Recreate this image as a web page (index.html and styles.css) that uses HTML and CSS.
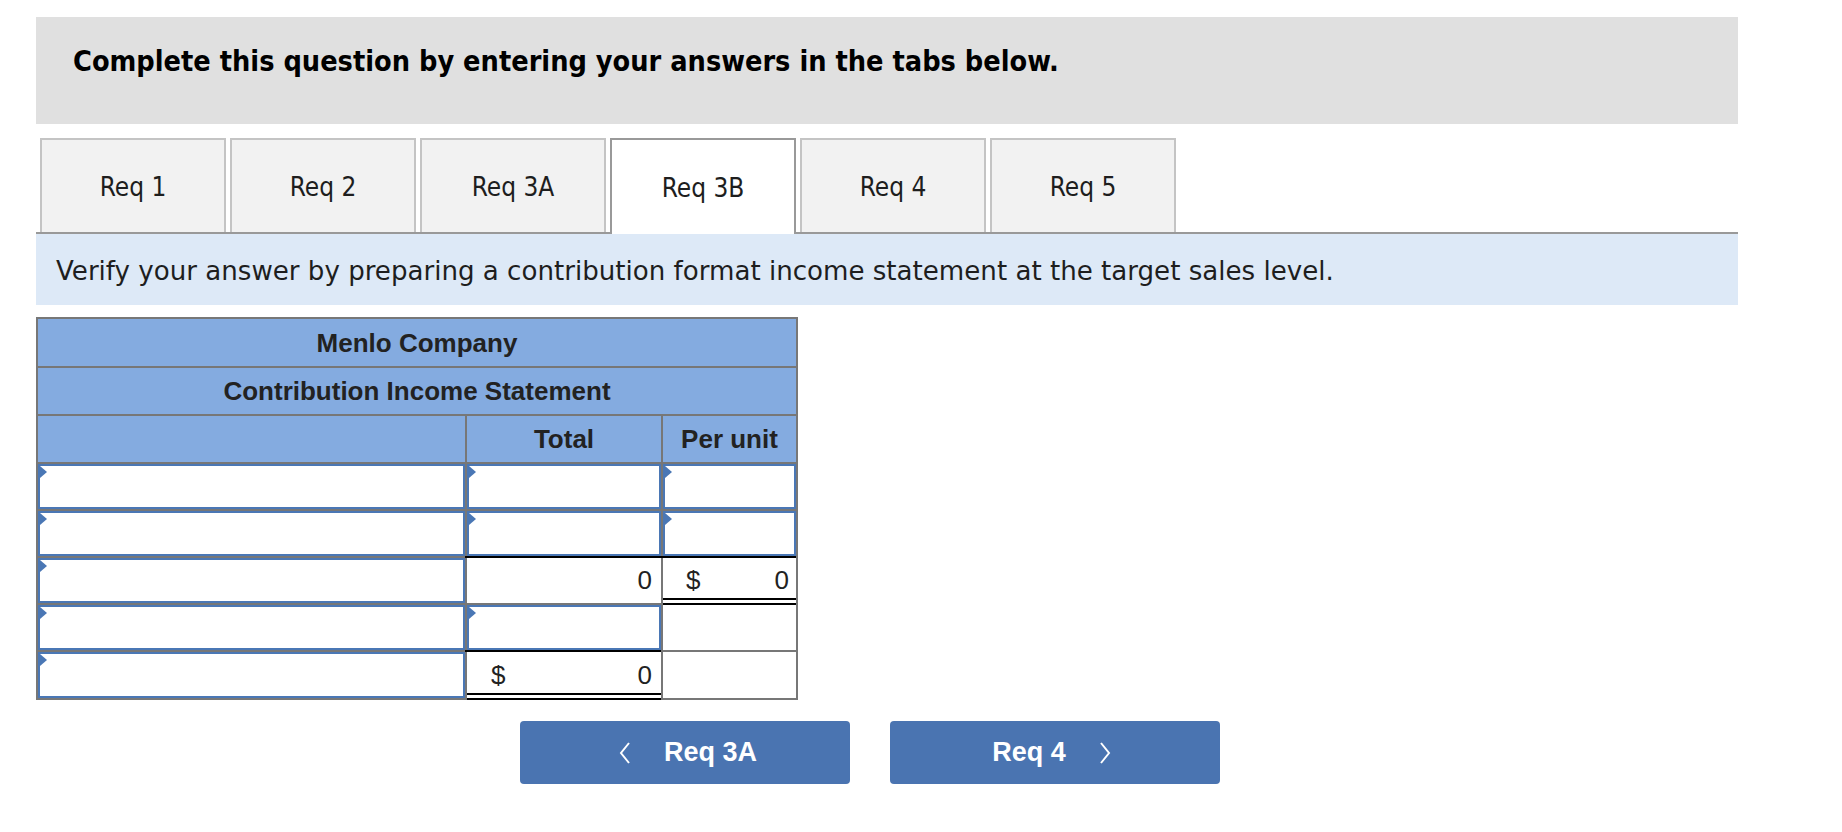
FILE: index.html
```html
<!DOCTYPE html>
<html lang="en">
<head>
<meta charset="utf-8">
<title>Req 3B</title>
<link rel="stylesheet" href="styles.css">
</head>
<body>
<div class="page">
  <div class="prompt"><h1>Complete this question by entering your answers in the tabs below.</h1></div>

  <div class="tabs">
    <div class="tab">Req 1</div>
    <div class="tab">Req 2</div>
    <div class="tab">Req 3A</div>
    <div class="tab active">Req 3B</div>
    <div class="tab">Req 4</div>
    <div class="tab">Req 5</div>
  </div>

  <div class="instr">Verify your answer by preparing a contribution format income statement at the target sales level.</div>

  <div class="stmt">
    <div class="hd span3">Menlo Company</div>
    <div class="hd span3">Contribution Income Statement</div>
    <div class="hd"></div>
    <div class="hd">Total</div>
    <div class="hd">Per unit</div>

    <div class="cell inp"></div>
    <div class="cell inp"></div>
    <div class="cell inp"></div>

    <div class="cell inp"></div>
    <div class="cell inp"></div>
    <div class="cell inp"></div>

    <div class="cell inp"></div>
    <div class="cell num top"><span>0</span></div>
    <div class="cell num money unit top dbl"><span>$</span><span>0</span></div>

    <div class="cell inp"></div>
    <div class="cell inp"></div>
    <div class="cell"></div>

    <div class="cell inp"></div>
    <div class="cell num money top dbl"><span>$</span><span>0</span></div>
    <div class="cell"></div>
  </div>

  <div class="nav">
    <div class="btn prev">
      <svg class="chev" width="12" height="22" viewBox="0 0 12 22"><polyline points="10,1 2,11 10,21" fill="none" stroke="#fff" stroke-width="2"/></svg>
      <span>Req 3A</span>
    </div>
    <div class="btn next">
      <span>Req 4</span>
      <svg class="chev" width="12" height="22" viewBox="0 0 12 22"><polyline points="2,1 10,11 2,21" fill="none" stroke="#fff" stroke-width="2"/></svg>
    </div>
  </div>
</div>
</body>
</html>
```

FILE: styles.css
```css
html, body {
  margin: 0;
  background: #fff;
}
body {
  font-family: "DejaVu Sans", Verdana, sans-serif;
  color: #1e1e1e;
}
.page {
  width: 1702px;
  padding: 17px 0 0 36px;
}
.prompt {
  height: 107px;
  box-sizing: border-box;
  background: #e0e0e0;
  padding: 27px 0 0 37px;
}
.prompt h1 {
  margin: 0;
  font-family: "DejaVu Sans Condensed", "DejaVu Sans", sans-serif;
  font-size: 28.6px;
  line-height: 34px;
  font-weight: bold;
  color: #000;
}
.tabs {
  display: flex;
  align-items: flex-start;
  gap: 4px;
  margin-top: 14px;
  padding-left: 4px;
  height: 94px;
  border-bottom: 2px solid #999;
}
.tab {
  width: 186px;
  height: 94px;
  box-sizing: border-box;
  border: 2px solid #c4c4c4;
  border-bottom: none;
  background: #f2f2f2;
  display: flex;
  align-items: center;
  justify-content: center;
  padding-top: 2px;
  font-family: "DejaVu Sans Condensed", "DejaVu Sans", sans-serif;
  font-size: 26px;
  color: #1e1e1e;
}
.tab.active {
  height: 96px;
  background: #fff;
  border-color: #999;
}
.instr {
  height: 71px;
  box-sizing: border-box;
  background: #dde9f7;
  padding-left: 20px;
  padding-top: 2px;
  display: flex;
  align-items: center;
  font-size: 26.1px;
  color: #1e1e1e;
}
.stmt {
  margin-top: 12px;
  width: 762px;
  box-sizing: border-box;
  display: grid;
  grid-template-columns: 427px 194px 133px;
  grid-template-rows: 47px 46px 46px 45px 45px 45px 45px 46px;
  gap: 2px;
  padding: 2px;
  background: #777;
  font-family: "Liberation Sans", Arial, sans-serif;
  font-size: 26px;
  color: #222;
}
.hd {
  background: #84abe0;
  font-weight: bold;
  display: flex;
  align-items: center;
  justify-content: center;
  padding-top: 1px;
}
.span3 {
  grid-column: 1 / 4;
}
.cell {
  background: #fff;
  position: relative;
  box-sizing: border-box;
}
.inp {
  border: 2px solid #4a77b5;
}
.inp::before {
  content: "";
  position: absolute;
  top: 0;
  left: 0;
  width: 0;
  height: 0;
  border-left: 7px solid #4a77b5;
  border-top: 6px solid transparent;
  border-bottom: 6px solid transparent;
}
.num {
  display: flex;
  align-items: center;
  justify-content: flex-end;
  padding-right: 9px;
}
.money {
  justify-content: space-between;
  padding-left: 24px;
}
.money.unit {
  padding-left: 23px;
  padding-right: 7px;
}
.top::before {
  content: "";
  position: absolute;
  top: -2px;
  left: -2px;
  right: 0;
  height: 2px;
  background: #000;
}
.dbl::after {
  content: "";
  position: absolute;
  left: 0;
  right: 0;
  bottom: -2px;
  height: 3px;
  background: #fff;
  border-top: 2px solid #000;
  border-bottom: 2px solid #000;
}
.nav {
  display: flex;
  gap: 40px;
  margin: 21px 0 0 484px;
}
.btn {
  width: 330px;
  height: 63px;
  box-sizing: border-box;
  border-radius: 4px;
  background: #4a74b1;
  color: #fff;
  font-family: "Liberation Sans", Arial, sans-serif;
  font-weight: bold;
  font-size: 27px;
  display: flex;
  align-items: center;
  justify-content: center;
  gap: 33px;
}
.btn.prev {
  padding-left: 6px;
}
.btn.next {
  padding-right: 7px;
}
.chev {
  display: block;
}
```
